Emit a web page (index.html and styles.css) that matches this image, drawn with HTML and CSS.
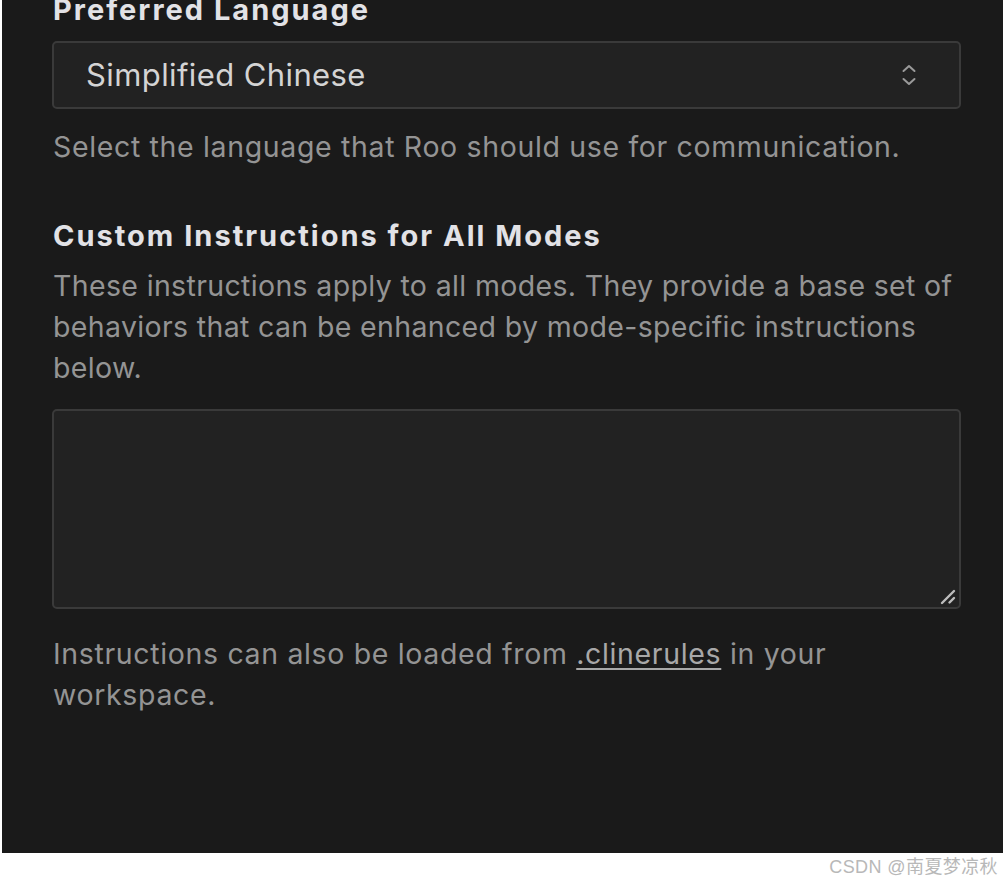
FILE: index.html
```html
<!DOCTYPE html>
<html lang="en">
<head>
<meta charset="utf-8">
<title>Settings</title>
<link rel="stylesheet" href="styles.css">
</head>
<body>
<div class="page">
  <main class="panel">
    <section class="group">
      <h2 class="label label-first">Preferred Language</h2>
      <div class="select">
        <span class="select-value">Simplified Chinese</span>
        <svg class="select-arrows" width="16" height="22" viewBox="0 0 16 22" fill="none" stroke="#9a9a9a" stroke-width="2" stroke-linecap="round" stroke-linejoin="round">
          <path d="M2.5 7 L8 2 L13.5 7"/>
          <path d="M2.5 15 L8 20 L13.5 15"/>
        </svg>
      </div>
      <p class="help help-select">Select the language that Roo should use for communication.</p>
    </section>
    <section class="group">
      <h2 class="label label-second">Custom Instructions for All Modes</h2>
      <p class="help help-desc">These instructions apply to all modes. They provide a base set of behaviors that can be enhanced by mode-specific instructions below.</p>
      <div class="textarea">
        <svg class="grip" width="18" height="18" viewBox="0 0 18 18" fill="none" stroke="#bdbdbd" stroke-width="2.4" stroke-linecap="round">
          <path d="M3 16 L15 4"/>
          <path d="M10.5 15.5 L15 11"/>
        </svg>
      </div>
      <p class="help help-foot">Instructions can also be loaded from <a class="link" href="#">.clinerules</a> in your workspace.</p>
    </section>
  </main>
  <div class="watermark">CSDN @南夏梦凉秋</div>
</div>
</body>
</html>
```
FILE: styles.css
```css
html, body {
  margin: 0;
  padding: 0;
  background: #ffffff;
}
body {
  width: 1003px;
  height: 886px;
  overflow: hidden;
  font-family: Inter, "Noto Sans", "Liberation Sans", sans-serif;
}
.page {
  display: flex;
  flex-direction: column;
  height: 886px;
}
.panel {
  margin-left: 2px;
  height: 853px;
  background: #1a1a1a;
  padding: 0 42px 0 50px;
  box-sizing: border-box;
  overflow: hidden;
}
.group {
  display: flex;
  flex-direction: column;
}
.label {
  margin: 0;
  color: #e2e2e6;
  font-size: 29px;
  font-weight: 700;
  line-height: 32px;
  letter-spacing: 2px;
  padding-left: 1px;
}
.label-first {
  margin-top: -6px;
}
.label-second {
  margin-top: 53px;
}
.select {
  margin-top: 15px;
  height: 68px;
  box-sizing: border-box;
  border: 2px solid #3a3a3a;
  border-radius: 5px;
  background: #222222;
  display: flex;
  align-items: center;
  justify-content: space-between;
  padding: 0 42px 0 32px;
}
.select-value {
  color: #d4d4d4;
  font-size: 31px;
  line-height: 36px;
  letter-spacing: 0.4px;
}
.select-arrows {
  display: block;
}
.help {
  margin: 0;
  color: #949494;
  font-size: 28.5px;
  line-height: 41px;
  letter-spacing: 0.65px;
  padding-left: 1px;
}
.help-select {
  margin-top: 17px;
}
.help-desc {
  margin-top: 13px;
  margin-right: -14px;
  letter-spacing: 0.35px;
}
.help-foot {
  margin-top: 24px;
}
.textarea {
  margin-top: 21px;
  height: 200px;
  box-sizing: border-box;
  border: 2px solid #3a3a3a;
  border-radius: 5px;
  background: #222222;
  position: relative;
}
.grip {
  position: absolute;
  right: 2px;
  bottom: 2px;
}
.link {
  color: #a8a8a8;
  text-decoration: underline;
  text-underline-offset: 4px;
  text-decoration-thickness: 2px;
}
.watermark {
  align-self: flex-end;
  margin-top: 3px;
  margin-right: 5px;
  color: #b8b8b8;
  font-family: "Liberation Sans", "Noto Sans CJK SC", sans-serif;
  font-size: 18px;
  line-height: 22px;
  letter-spacing: 0.4px;
}
```
